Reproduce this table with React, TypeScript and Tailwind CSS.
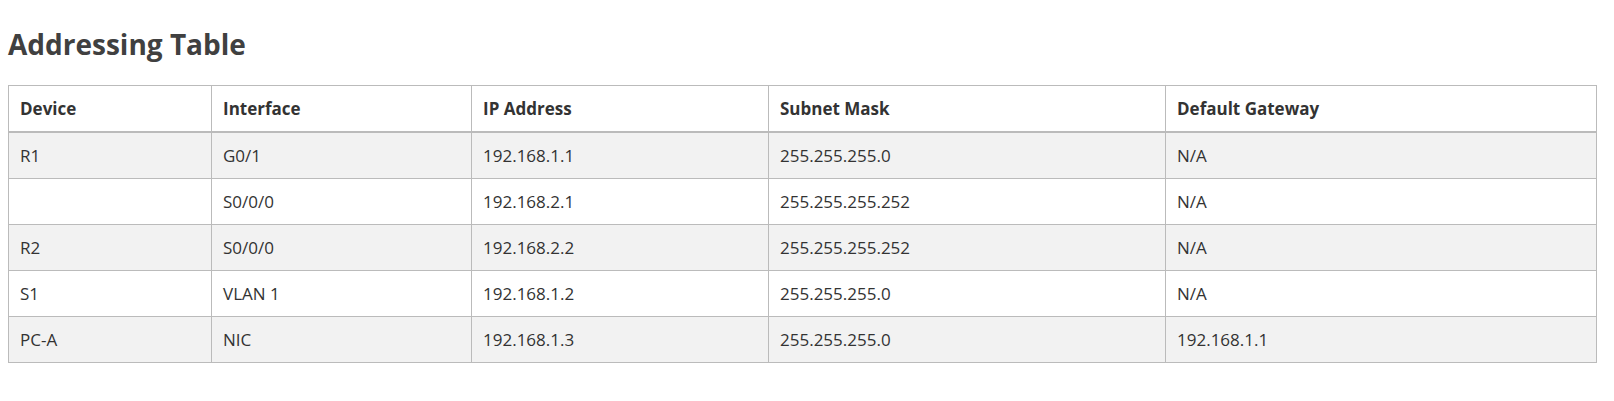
const rows = [
  ["R1", "G0/1", "192.168.1.1", "255.255.255.0", "N/A"],
  ["", "S0/0/0", "192.168.2.1", "255.255.255.252", "N/A"],
  ["R2", "S0/0/0", "192.168.2.2", "255.255.255.252", "N/A"],
  ["S1", "VLAN 1", "192.168.1.2", "255.255.255.0", "N/A"],
  ["PC-A", "NIC", "192.168.1.3", "255.255.255.0", "192.168.1.1"],
];

const headers = ["Device", "Interface", "IP Address", "Subnet Mask", "Default Gateway"];
const widths = ["w-[203px]", "w-[260px]", "w-[297px]", "w-[397px]", ""];

export default function App() {
  return (
    <div className="bg-white px-2 pt-[27px] font-['Open_Sans',sans-serif] text-[#333]">
      <h2 className="text-[28px] font-bold leading-[34px] text-[#404040]">Addressing Table</h2>
      <table className="mt-[24px] w-[1589px] border-collapse border border-[#bbb] text-[17px]">
        <thead>
          <tr>
            {headers.map((h, i) => (
              <th
                key={h}
                className={`${widths[i]} border border-b-2 border-[#bbb] px-[11px] py-[12px] text-left font-bold leading-[21px]`}
              >
                {h}
              </th>
            ))}
          </tr>
        </thead>
        <tbody>
          {rows.map((r, ri) => (
            <tr key={ri} className={ri % 2 === 0 ? "bg-[#f2f2f2]" : "bg-white"}>
              {r.map((c, ci) => (
                <td key={ci} className="h-[46px] border border-[#bbb] px-[11px] py-[12px] leading-[21px]">
                  {c}
                </td>
              ))}
            </tr>
          ))}
        </tbody>
      </table>
    </div>
  );
}
